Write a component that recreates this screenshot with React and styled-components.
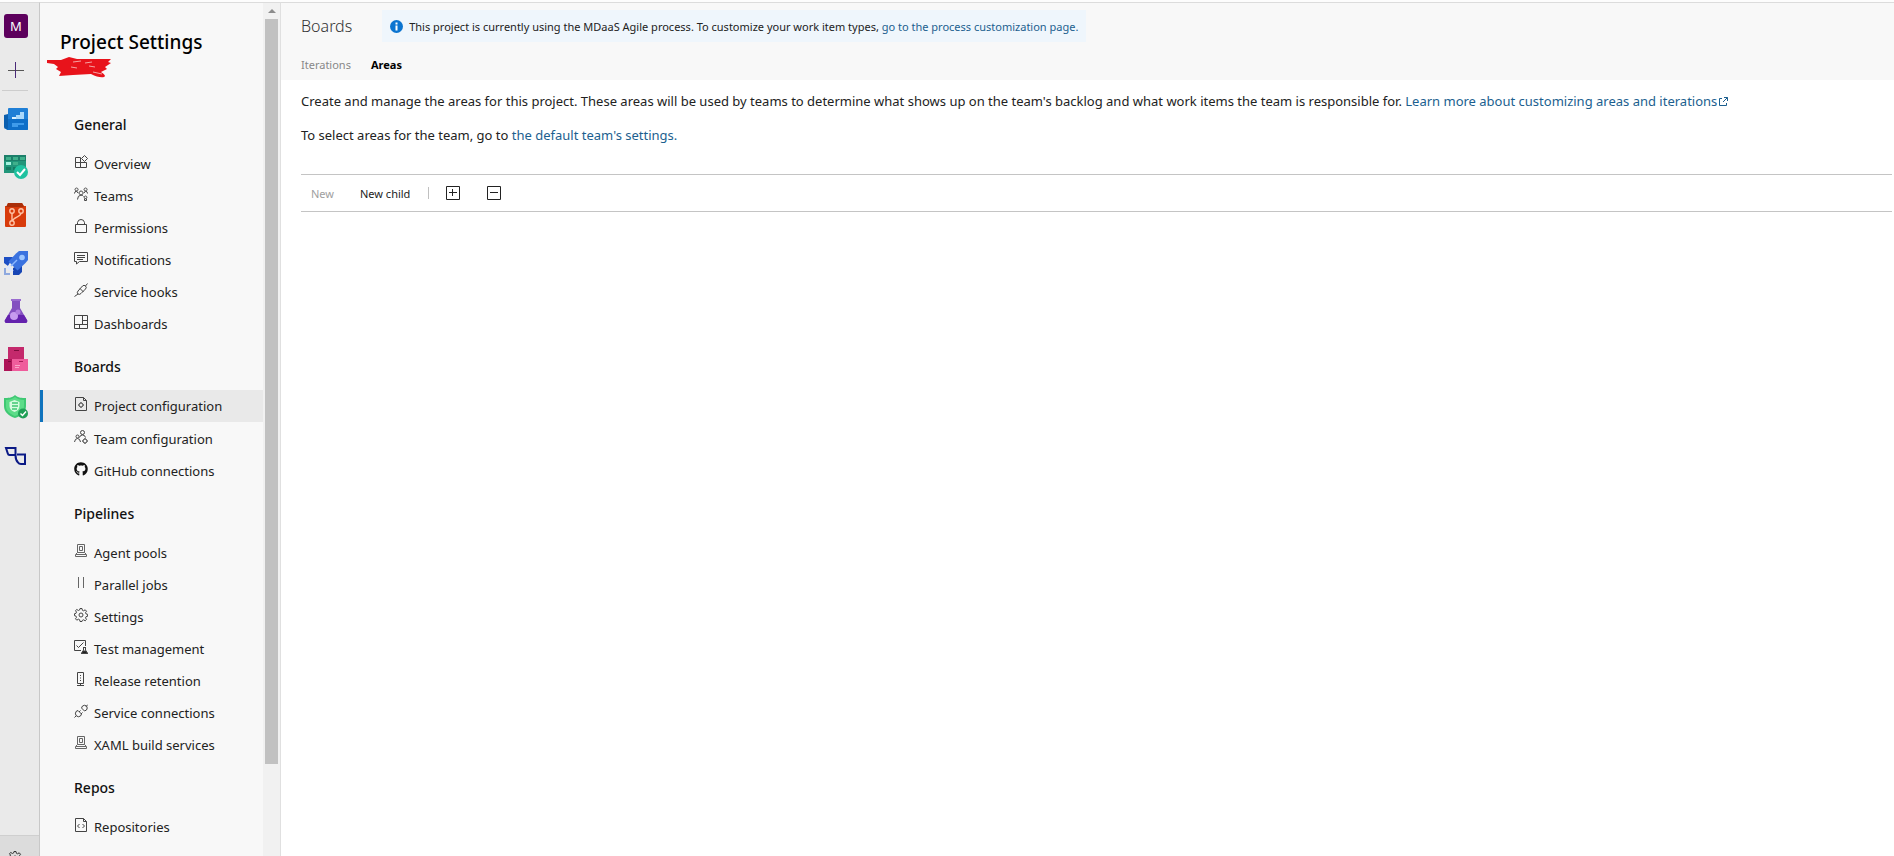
import { useState } from "react";
import styled, { createGlobalStyle } from "styled-components";
import { FaGithub } from "react-icons/fa";

const GlobalStyle = createGlobalStyle`
  * {
    box-sizing: border-box;
  }
  body {
    margin: 0;
    background: #fff;
    color: #222;
    font-family: "Noto Sans", "Open Sans", sans-serif;
    font-size: 13px;
  }
  button {
    font-family: inherit;
    border: none;
    background: none;
    padding: 0;
    cursor: pointer;
  }
  a {
    text-decoration: none;
  }
  svg {
    display: block;
    flex: none;
  }
`;

const Page = styled.div`
  height: 100vh;
  display: flex;
  overflow: hidden;
  border-top: 2px solid #fdfdfd;
`;

/* product rail */

const Rail = styled.nav`
  flex: none;
  width: 40px;
  display: flex;
  flex-direction: column;
  background: #eaeaea;
  border-top: 1px solid #dcdcdc;
  border-right: 1px solid #c8c8c8;
`;

const RailLink = styled.a`
  flex: none;
  height: ${(props) => props.$height || 48}px;
  padding-left: 4px;
  display: flex;
  align-items: center;
`;

const RailButton = styled.button`
  flex: none;
  height: 41px;
  padding-left: 4px;
  display: flex;
  align-items: center;
`;

const ProjectBadge = styled.span`
  width: 24px;
  height: 24px;
  border-radius: 3px;
  background: #5c005c;
  color: #fff;
  font-size: 13px;
  line-height: 24px;
  text-align: center;
`;

const RailLine = styled.div`
  flex: none;
  height: 1px;
  margin: 0 11px 4px 2px;
  background: #cdcdcd;
`;

const RailFooter = styled.div`
  flex: none;
  height: 21px;
  margin-top: auto;
  padding: 15px 0 0 8px;
  overflow: hidden;
  background: #dcdcdc;
  border-top: 1px solid #cfcfcf;
`;

/* settings sidebar */

const Sidebar = styled.aside`
  flex: none;
  width: 223px;
  overflow: hidden;
  background: #f8f8f8;
  border-top: 1px solid #dcdcdc;
`;

const SidebarHead = styled.header`
  height: 95px;
  padding: 25px 0 0 7px;
`;

const SidebarTitle = styled.h1`
  margin: 0;
  padding-left: 13px;
  font-size: 19px;
  line-height: 28px;
  font-weight: 500;
  color: #000;
`;

const GroupTitle = styled.h2`
  margin: 0;
  height: 50px;
  padding: 15px 0 0 34px;
  font-size: 14px;
  line-height: 24px;
  font-weight: 500;
  color: #111;
`;

const List = styled.ul`
  margin: 0;
  padding: 0;
  list-style: none;
`;

const Item = styled.a`
  height: 32px;
  margin-bottom: ${(props) => (props.$active ? 1 : 0)}px;
  padding-left: ${(props) => (props.$active ? 31 : 34)}px;
  display: flex;
  align-items: center;
  gap: 6px;
  color: #222;
  background: ${(props) => (props.$active ? "#e9e9e9" : "transparent")};
  border-left: ${(props) => (props.$active ? "3px solid #0f73bd" : "none")};

  svg {
    margin-bottom: 4px;
  }
`;

const Scrollbar = styled.div`
  flex: none;
  width: 18px;
  padding: 0 2px;
  display: flex;
  flex-direction: column;
  background: #f1f1f1;
  border-top: 1px solid #dcdcdc;
  border-right: 1px solid #e0e0e0;
`;

const ScrollArrow = styled.div`
  height: 16px;
  display: flex;
  align-items: center;
  justify-content: center;
`;

const ScrollTrack = styled.div`
  flex: 1;
`;

const ScrollThumb = styled.div`
  height: 89%;
  background: #c1c1c1;
`;

/* content */

const Main = styled.main`
  flex: 1;
  min-width: 0;
`;

const Header = styled.header`
  height: 78px;
  padding: 7px 20px 0;
  background: #f8f8f8;
  border-top: 1px solid #dcdcdc;
`;

const HeaderRow = styled.div`
  display: flex;
  align-items: center;
  gap: 30px;
`;

const HubTitle = styled.h2`
  margin: 0;
  font-size: 16px;
  line-height: 24px;
  font-weight: 300;
  color: #333;
`;

const Banner = styled.div`
  height: 32px;
  padding: 0 8px;
  display: flex;
  align-items: center;
  gap: 6px;
  background: #eff6fc;
  font-size: 11px;
  white-space: nowrap;
`;

const Tabs = styled.nav`
  margin-top: 13px;
  display: flex;
  gap: 20px;
`;

const Tab = styled.a`
  font-size: 11px;
  line-height: 20px;
  font-weight: ${(props) => (props.$active ? 700 : 400)};
  color: ${(props) => (props.$active ? "#000" : "#888")};
`;

const Body = styled.section`
  padding: 11px 2px 0 20px;
`;

const Text = styled.p`
  margin: 0 0 14px;
  line-height: 20px;
`;

const Link = styled.a`
  color: #1c5f8f;

  svg {
    display: inline;
    margin-left: 2px;
  }
`;

const Toolbar = styled.div`
  height: 38px;
  margin-top: 29px;
  padding-left: 10px;
  display: flex;
  align-items: center;
  border-top: 1px solid #c4c4c4;
  border-bottom: 1px solid #c4c4c4;
`;

const ToolButton = styled.button`
  margin-right: ${(props) => props.$space || 0}px;
  font-size: 11px;
  color: #222;

  &:disabled {
    color: #a0a0a0;
  }
`;

const Separator = styled.span`
  width: 1px;
  height: 12px;
  margin-right: 17px;
  background: #c0c0c0;
`;

const railIcons = {
  Overview: (
    <>
      <path d="M0 8l4-1v15H2a2 2 0 0 1-2-2z" fill="#0b5fae" />
      <rect x="4" y="1" width="20" height="22" rx="1" fill="#1f7fd6" />
      <path d="M4 12h20v10a1 1 0 0 1-1 1H2l2-2z" fill="#0f6fc8" />
      <path d="M8 10h4V8h4V5h4v7H8z" fill="#a9d8fb" />
      <path d="M8 10h4v2H8z" fill="#dff2ff" />
      <path d="M8 16h12v2H8z" fill="#3f9bea" />
      <path d="M8 18h6v2H8z" fill="#3f9bea" />
    </>
  ),
  Boards: (
    <>
      <path d="M0 0h22v18H0z" fill="#21967a" />
      <path d="M0 0h22v6H0z" fill="#1c7f6a" />
      <path d="M2 2h5v3H2zM9 2h5v3H9zM16 2h5v3h-5zM9 7h5v3H9z" fill="#3fb08b" />
      <path d="M2 7h5v3H2z" fill="#a4f2df" />
      <path d="M2 12h5v3H2zM9 12h4v3H9z" fill="#167a62" />
      <circle cx="17" cy="17" r="7" fill="#1fc2a0" />
      <path d="M13 17l3 3 5-6" fill="none" stroke="#fff" strokeWidth="2" />
    </>
  ),
  Repos: (
    <>
      <path d="M4 0h14l2 3h2v20a1 1 0 0 1-1 1H2a1 1 0 0 1-1-1V3h2z" fill="#d83b0b" />
      <path d="M4 0h14l2 4H2z" fill="#a92f0a" />
      <g fill="none" stroke="#ffc3a6" strokeWidth="1.4">
        <circle cx="8" cy="8" r="2.2" />
        <circle cx="17" cy="8" r="2.2" />
        <circle cx="8" cy="20" r="2.2" />
        <path d="M8 10v7.500M17 10c0 4-8 4-8.500 8" />
      </g>
    </>
  ),
  Pipelines: (
    <>
      <path d="M0 6h9l-5 9-4-3z" fill="#1d4fc4" />
      <path d="M9 17l9-5v9l-3 3H9z" fill="#1746b5" />
      <path d="M12 2.500L15 0h9v9l-2.500 3-8 7.500-9-9z" fill="#3a72df" />
      <circle cx="18" cy="6.500" r="2.800" fill="#9dc6ff" />
      <path d="M7 15l6-6" stroke="#8cb8ff" strokeWidth="1.400" />
      <path d="M4 14l6 6-2-.5-1 2-2.500-3.500-3-1 2.500-1z" fill="#dbe7ff" />
      <path d="M0 17v7h6v-2H2v-5z" fill="#8ea9df" />
    </>
  ),
  "Test Plans": (
    <>
      <path d="M8 0h8v9l7 12a2 2 0 0 1-2 3H3a2 2 0 0 1-2-3L8 9z" fill="#8450c0" />
      <path d="M4 16h16l3 5a2 2 0 0 1-2 3H3a2 2 0 0 1-2-3z" fill="#6422ad" />
      <path d="M7 0h10v2H7z" fill="#9a6bd0" />
      <circle cx="10" cy="17" r="4" fill="#c79bef" />
      <circle cx="14" cy="13" r="2.500" fill="#b17fe0" />
    </>
  ),
  Artifacts: (
    <>
      <path d="M4 0h16v12H4z" fill="#c4296c" />
      <path d="M0 12h12v12H0z" fill="#ad1457" />
      <path d="M8 12h16v12H8z" fill="#ef5c9c" />
      <path d="M10 3h5v1h-5zM4 14h3v1H4z" fill="#7d0c3d" />
      <path d="M15 14h4v1h-4z" fill="#a81d59" />
      <path d="M11 18h5v1h-5zM11 20h4v1h-4z" fill="#f9a3c8" />
    </>
  ),
  Security: (
    <>
      <path d="M11 0c3 3 7 3 11 3v8c0 6-5 10-11 12C5 21 0 17 0 11V3c4 0 8 0 11-3z" fill="#3fc873" />
      <path d="M11 2c2 2 6 3 9 3v6c0 5-4 8-9 10-5-2-9-5-9-10V5c3 0 7-1 9-3z" fill="#5cdc88" />
      <path d="M10.500 5l5 2v4c0 3-2 5-5 6-3-1-5-3-5-6V7z" fill="#d6fbe0" />
      <path d="M8 8h6M8 11h6M8 14h5" stroke="#3fc873" strokeWidth="1.400" />
      <circle cx="19" cy="18.500" r="5" fill="#1f9f55" />
      <path d="M16.500 18.500l2 2 3.500-4" fill="none" stroke="#fff" strokeWidth="1.400" />
    </>
  ),
  Extension: (
    <path
      d="M11.500 12H5.500q-1.300 0-1.700-1.500L2 5h9.500v7q0 5 2.500 7.500 1 1.500 3 1.500h4V11.500h-8"
      fill="none"
      stroke="#0b1a86"
      strokeWidth="2"
    />
  ),
};

const plug = (
  <>
    <path d="M4 8l4.500-5q1.500-1.500 3 0t0 3L7 10.500q-1.500 1.500-3 .5t0-3zM6 5.500l3.500 3.500M11.500 3l2-2.500M4 11L.5 13.500" />
  </>
);

const computer = (
  <>
    <path d="M3.500.5h7v8h-7zM5.500 2.500h3v4h-3z" stroke="#666" />
    <path d="M3.500 8.500l-2 2v2h11v-2l-2-2M2 10.500h10" stroke="#666" />
  </>
);

const menuIcons = {
  overview: (
    <path d="M1.500 2.500h5v5h-5zM1.500 7.500h5v5h-5zM6.500 7.500h6v5h-6zM10.500.500l3 3-3 3-3-3z" />
  ),
  teams: (
    <path d="M2.500 1a1.500 1.500 0 1 0 .1 0M11.500 1a1.500 1.500 0 1 0 .1 0M7 4a2 2 0 1 0 .1 0M.5 6.500q0-2 2-2.500l1.500 2M13.500 6.500q0-2-2-2.500L10 6M3.500 12.500q0-4 3.500-4.500 1.500 0 2.500 1.500M11.500 9a1.300 1.300 0 1 0 .1 0M10.500 11.500v2h2v-2" />
  ),
  lock: <path d="M1.500 5.500h11v8h-11zM3.500 5.500V3.500q.5-3 3.500-3t3.500 3v2" />,
  message: <path d="M.5 1.500h13v9h-8l-3 2.500v-2.500h-2zM3 4.500h8M3 6.500h8M3 8.500h6" />,
  plug,
  dashboard: <path d="M.5.500h13v13H.5zM8.500.500v9M.5 9.500h13M8.500 5.500h5M5.500 9.500v4" />,
  fileGear: (
    <>
      <path d="M1.500.500h8l3 3v10h-11zM9.500.500v3h3" />
      <circle cx="7" cy="8" r="2" />
      <path d="M7 5v1M7 10v1M4 8h1M9 8h1" />
    </>
  ),
  teamGear: (
    <>
      <circle cx="8.500" cy="2.500" r="2" />
      <circle cx="3.500" cy="6.500" r="1.500" />
      <path d="M5.500 7.500q.5-2.500 3-2.500t3 2.500M.5 12q.5-3.500 3-3.500T6.500 12" />
      <circle cx="11" cy="11" r="2" />
      <path d="M11 8v1M11 13v1M8 11h1M13 11h1" />
    </>
  ),
  computer,
  pause: <path d="M4.500 1v11M9.500 1v11" stroke="#666" />,
  gear: (
    <>
      <path d="M6 .5h2l.4 1.800 1.200.5L11.200 1.800l1.300 1.400-1 1.500.5 1.200 1.600.4v2l-1.600.4-.5 1.200 1 1.500-1.300 1.400-1.600-1-1.200.5L8 13.500H6l-.4-1.800-1.200-.5-1.600 1-1.300-1.400 1-1.500L2 8.100.5 7.700v-2L2 5.300l.5-1.200-1-1.500L2.800 1.500l1.600 1L5.600 2z" />
      <circle cx="7" cy="7" r="2" />
    </>
  ),
  test: (
    <>
      <path d="M7 10.500H.5v-10h11V6M2.500 5.500l2 2 5-5" />
      <path d="M9 7.500h3M9.500 7.500v2.500l-2 3.500h6l-2-3.500V7.500z" />
      <path d="M9 11h3l1.500 2.500h-6z" fill="#222" />
    </>
  ),
  server: <path d="M3.500.500h6v11h-6zM6.500 3v1M6.500 5.500v1M6.500 8v1M3 13.500h7M6.500 11.500v2" />,
  connect: (
    <path d="M2 7.500l2-1 3.500 3.500-1 2q-2 1.500-4 0-2-2-.5-4.500zM7.500 4l1-2q2-1.500 4 0 1.500 2 0 4l-2 1zM5 8l1.500-1.500M7 10l1.500-1.500M12 2.500L14 .500M2 12L.5 13.500" />
  ),
  fileCode: (
    <path d="M1.500.500h8l3 3v10h-11zM9.500.500v3h3M5.500 6l-2 2 2 2M8.500 6l2 2-2 2" />
  ),
};

const groups = [
  {
    title: "General",
    items: [
      ["Overview", "overview"],
      ["Teams", "teams"],
      ["Permissions", "lock"],
      ["Notifications", "message"],
      ["Service hooks", "plug"],
      ["Dashboards", "dashboard"],
    ],
  },
  {
    title: "Boards",
    items: [
      ["Project configuration", "fileGear"],
      ["Team configuration", "teamGear"],
      ["GitHub connections", "github"],
    ],
  },
  {
    title: "Pipelines",
    items: [
      ["Agent pools", "computer"],
      ["Parallel jobs", "pause"],
      ["Settings", "gear"],
      ["Test management", "test"],
      ["Release retention", "server"],
      ["Service connections", "connect"],
      ["XAML build services", "computer"],
    ],
  },
  {
    title: "Repos",
    items: [["Repositories", "fileCode"]],
  },
];

const MenuIcon = ({ name }) => {
  if (name === "github") return <FaGithub size={14} color="#111" />;
  return (
    <svg width="14" height="14" viewBox="0 0 14 14" fill="none" stroke="#444">
      {menuIcons[name]}
    </svg>
  );
};

const BoxIcon = ({ plus }) => (
  <svg width="14" height="14" viewBox="0 0 14 14" fill="none" stroke="#222">
    <path d="M.5.500h13v13H.5zM3 6.500h8" />
    {plus && <path d="M6.500 3v7" />}
  </svg>
);

const App = () => {
  const [current, setCurrent] = useState("Project configuration");

  return (
    <>
      <GlobalStyle />
      <Page>
        <Rail aria-label="Products">
          <RailLink href="#project" $height={46}>
            <ProjectBadge>M</ProjectBadge>
          </RailLink>
          <RailButton aria-label="Add">
            <svg width="24" height="24" viewBox="0 0 24 24" strokeWidth="1">
              <path d="M4 12.500h16" stroke="#555" />
              <path d="M11.500 4v16" stroke="#4b2a78" />
            </svg>
          </RailButton>
          <RailLine />
          {Object.keys(railIcons).map((name) => (
            <RailLink key={name} href="#product" aria-label={name}>
              <svg width="24" height="24" viewBox="0 0 24 24">
                {railIcons[name]}
              </svg>
            </RailLink>
          ))}
          <RailFooter>
            <svg width="14" height="14" viewBox="0 0 14 14" fill="none" stroke="#333">
              {menuIcons.gear}
            </svg>
          </RailFooter>
        </Rail>

        <Sidebar>
          <SidebarHead>
            <SidebarTitle>Project Settings</SidebarTitle>
            <svg width="65" height="22" viewBox="0 0 65 22">
              <path
                d="M0 4l14 0 8-3 8 2 34 0-3 3 3 1-6 4 2 2-6 3q6 4 3 5-5 1-13-3l-18 1-14 1 2-4-5-3 2-2-4-3-7-1z"
                fill="#e8131b"
              />
              <path d="M26 6l8-1M38 7l7-1M24 11l6 1M42 10l6 1M46 16l9 2" stroke="#f6a3a3" />
            </svg>
          </SidebarHead>
          {groups.map((group) => (
            <section key={group.title}>
              <GroupTitle>{group.title}</GroupTitle>
              <List>
                {group.items.map(([label, icon]) => (
                  <li key={label}>
                    <Item
                      href="#settings"
                      $active={label === current}
                      onClick={() => setCurrent(label)}
                    >
                      <MenuIcon name={icon} />
                      {label}
                    </Item>
                  </li>
                ))}
              </List>
            </section>
          ))}
        </Sidebar>
        <Scrollbar>
          <ScrollArrow>
            <svg width="8" height="4" viewBox="0 0 8 4">
              <path d="M0 4l4-4 4 4z" fill="#8c8c8c" />
            </svg>
          </ScrollArrow>
          <ScrollTrack>
            <ScrollThumb />
          </ScrollTrack>
        </Scrollbar>

        <Main>
          <Header>
            <HeaderRow>
              <HubTitle>Boards</HubTitle>
              <Banner>
                <svg width="13" height="13" viewBox="0 0 13 13">
                  <circle cx="6.500" cy="6.500" r="6.500" fill="#0b74d0" />
                  <path d="M5.500 2.500h2v2h-2zM5.500 5.500h2v5h-2z" fill="#fff" />
                </svg>
                <span>
                  This project is currently using the MDaaS Agile process. To customize your work item types,{" "}
                  <Link href="#process">go to the process customization page.</Link>
                </span>
              </Banner>
            </HeaderRow>
            <Tabs>
              <Tab href="#iterations">Iterations</Tab>
              <Tab href="#areas" $active>
                Areas
              </Tab>
            </Tabs>
          </Header>
          <Body>
            <Text>
              Create and manage the areas for this project. These areas will be used by teams to determine what shows up on the team's backlog and what work items the team is responsible for.{" "}
              <Link href="#learn">
                Learn more about customizing areas and iterations
                <svg width="9" height="9" viewBox="0 0 9 9" fill="none" stroke="#1c5f8f">
                  <path d="M3 1.500H.5v7h7V6M5 .5h3.500V4M8.500.500L4 5" />
                </svg>
              </Link>
            </Text>
            <Text>
              To select areas for the team, go to <Link href="#team">the default team's settings.</Link>
            </Text>
            <Toolbar>
              <ToolButton disabled $space={26}>
                New
              </ToolButton>
              <ToolButton $space={18}>New child</ToolButton>
              <Separator />
              <ToolButton aria-label="Expand all" $space={27}>
                <BoxIcon plus />
              </ToolButton>
              <ToolButton aria-label="Collapse all">
                <BoxIcon />
              </ToolButton>
            </Toolbar>
          </Body>
        </Main>
      </Page>
    </>
  );
};

export default App;
